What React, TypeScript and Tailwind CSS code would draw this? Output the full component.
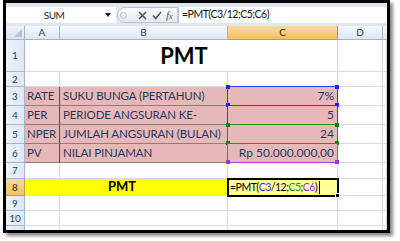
import type { ReactNode } from 'react';

const grid = 'border-r border-b border-[#d4dbe8]';
const font = "font-['Lato','Liberation_Sans',sans-serif]";

function RowHead({ n, h, active }: { n: string; h: string; active?: boolean }) {
  return (
    <div
      className={`w-[19px] ${h} shrink-0 flex items-center justify-center border-r border-b text-[10px] ${
        active
          ? 'bg-gradient-to-b from-[#f9d99f] to-[#f1c15f] border-[#c29b45] text-[#3b2a10]'
          : 'bg-gradient-to-r from-[#eef3fa] to-[#dfe7f2] border-[#9eb6ce] text-[#2c3f5a]'
      }`}
    >
      {n}
    </div>
  );
}

function Row({ n, h, active, children }: { n: string; h: string; active?: boolean; children: ReactNode }) {
  return (
    <div className={`flex ${h} shrink-0`}>
      <RowHead n={n} h={h} active={active} />
      {children}
    </div>
  );
}

function Plain({ w }: { w: string }) {
  return <div className={`${w} shrink-0 h-full ${grid}`} />;
}

function Tail() {
  return (
    <>
      <Plain w="w-[45px]" />
      <div className={`flex-1 h-full ${grid}`} />
    </>
  );
}

function Corner({ c, pos }: { c: string; pos: string }) {
  return <div className={`absolute w-[4px] h-[4px] ${c} ${pos}`} />;
}

function PinkRow({ n, a, b, c, box }: { n: string; a: string; b: string; c: string; box?: ReactNode }) {
  return (
    <Row n={n} h="h-[19px]">
      <div className="w-[35px] shrink-0 h-full bg-[#e6b9b8] border-r border-b border-r-[#5e4848] border-b-[#8f7c7c] flex items-center pl-[2px] text-[11.5px] tracking-[-0.1px] text-[#1f3864] whitespace-nowrap">
        {a}
      </div>
      <div className="w-[168px] shrink-0 h-full bg-[#e6b9b8] border-r border-b border-r-[#5e4848] border-b-[#8f7c7c] flex items-center pl-[3px] text-[11.5px] tracking-[-0.1px] text-[#1f3864] whitespace-nowrap overflow-hidden">
        {b}
      </div>
      <div className="relative w-[110px] shrink-0 h-full bg-[#e6b9b8] border-r border-b border-r-[#5e4848] border-b-[#8f7c7c] flex items-center justify-end pr-[3px] text-[12px] text-[#1f3864] whitespace-nowrap">
        {c}
        {box}
      </div>
      <Tail />
    </Row>
  );
}

function RefBox({ color, bg, top }: { color: string; bg: string; top?: boolean }) {
  return (
    <div className={`absolute -left-[1px] -top-[1px] -right-[1px] -bottom-[1px] border ${color}`}>
      {top !== false && <Corner c={bg} pos="-left-[2px] -top-[2px]" />}
      {top !== false && <Corner c={bg} pos="-right-[2px] -top-[2px]" />}
      <Corner c={bg} pos="-left-[2px] -bottom-[2px]" />
      <Corner c={bg} pos="-right-[2px] -bottom-[2px]" />
    </div>
  );
}

export default function App() {
  return (
    <div className={`w-[400px] h-[241px] bg-white ${font}`}>
      <div className="ml-[3px] w-[387px] h-[233px] border-[3px] border-black shadow-[3px_3px_3px_rgba(0,0,0,0.45)] bg-white overflow-hidden flex flex-col">
        {/* formula bar */}
        <div className="h-[23px] shrink-0 bg-[#dfe6f0] pt-[4px] pb-[3px] flex">
          <div className="w-[110px] h-full bg-white flex items-center">
            <span className="w-[96px] text-center text-[10px] text-[#222] tracking-[-0.5px]">SUM</span>
            <svg width="6" height="4" viewBox="0 0 6 4" className="ml-[3px]">
              <path d="M0 0h6L3 4z" fill="#222" />
            </svg>
          </div>
          <div className="w-[61px] h-full flex items-center rounded-l-full border border-[#b7c3d3] bg-gradient-to-b from-[#fbfcfe] to-[#e4e9f1] ml-[1px]">
            <div className="w-[7px] h-[7px] rounded-full border border-[#b8c0cc] bg-[#eef1f5] ml-[2px]" />
            <svg width="9" height="9" viewBox="0 0 9 9" className="ml-[11px]">
              <path d="M1 1l7 7M8 1L1 8" stroke="#555" strokeWidth="1.6" />
            </svg>
            <svg width="10" height="9" viewBox="0 0 10 9" className="ml-[5px]">
              <path d="M1 4.5l2.8 3L9 1" stroke="#555" strokeWidth="1.6" fill="none" />
            </svg>
            <span className="ml-[4px] font-['Liberation_Serif',serif] italic text-[11px] text-[#555] leading-none">
              f<span className="text-[8px]">x</span>
            </span>
          </div>
          <div className="flex-1 h-full bg-white border-l border-[#b7c3d3] flex items-center pl-[3px] text-[10.5px] tracking-[-0.5px] text-[#111] whitespace-nowrap">
            =PMT(C3/12;C5;C6)
          </div>
        </div>

        {/* column headers */}
        <div className="flex h-[14px] shrink-0 text-[10px] text-[#2c3f5a]">
          <div className="w-[19px] h-full relative bg-gradient-to-b from-[#eef3fa] to-[#dae3ef] border-r border-b border-[#9eb6ce]">
            <svg width="8" height="8" viewBox="0 0 8 8" className="absolute right-[2px] bottom-[2px]">
              <path d="M8 0v8H0z" fill="#b4c2d6" />
            </svg>
          </div>
          <div className="w-[35px] h-full flex items-center justify-center bg-gradient-to-b from-[#f4f7fb] to-[#dde6f1] border-r border-b border-[#9eb6ce]">A</div>
          <div className="w-[168px] h-full flex items-center justify-center bg-gradient-to-b from-[#f4f7fb] to-[#dde6f1] border-r border-b border-[#9eb6ce]">B</div>
          <div className="w-[110px] h-full flex items-center justify-center bg-gradient-to-b from-[#f9d99f] to-[#f1c15f] border-r border-b border-[#c29b45] text-[#3b2a10]">C</div>
          <div className="w-[45px] h-full flex items-center justify-center bg-gradient-to-b from-[#f4f7fb] to-[#dde6f1] border-r border-b border-[#9eb6ce]">D</div>
          <div className="flex-1 h-full bg-gradient-to-b from-[#f4f7fb] to-[#dde6f1] border-b border-[#9eb6ce]" />
        </div>

        {/* rows */}
        <Row n="1" h="h-[32px]">
          <div className={`w-[313px] shrink-0 h-full ${grid} flex items-center justify-center pl-[6px] text-[22px] font-bold text-black`}>
            PMT
          </div>
          <Tail />
        </Row>
        <Row n="2" h="h-[15px]">
          <Plain w="w-[35px]" />
          <Plain w="w-[168px]" />
          <Plain w="w-[110px]" />
          <Tail />
        </Row>
        <PinkRow n="3" a="RATE" b="SUKU BUNGA (PERTAHUN)" c="7%" box={<RefBox color="border-[#3a3aff]" bg="bg-[#2020ff]" />} />
        <PinkRow n="4" a="PER" b="PERIODE ANGSURAN KE-" c="5" />
        <PinkRow n="5" a="NPER" b="JUMLAH ANGSURAN (BULAN)" c="24" box={<RefBox color="border-[#2e8b2e]" bg="bg-[#108010]" />} />
        <PinkRow
          n="6"
          a="PV"
          b="NILAI PINJAMAN"
          c="Rp 50.000.000,00"
          box={<RefBox color="border-[#a040e0] border-t-[#2e8b2e]" bg="bg-[#9a30e0]" top={false} />}
        />
        <Row n="7" h="h-[16px]">
          <Plain w="w-[35px]" />
          <Plain w="w-[168px]" />
          <Plain w="w-[110px]" />
          <Tail />
        </Row>
        <Row n="8" h="h-[17px]" active>
          <div className="w-[203px] shrink-0 h-full bg-[#ffff00] border-r border-b border-[#d4dbe8] flex items-center justify-center pr-[8px] text-[13px] font-bold text-black">
            PMT
          </div>
          <div className="relative w-[110px] shrink-0 h-full">
            <div className="absolute -left-[1px] -top-[1px] w-[112px] h-[19px] border-2 border-black bg-[#ffff9a] flex items-center pl-[1px] text-[10.5px] tracking-[-0.5px] text-black whitespace-nowrap">
              <span>=PMT(</span>
              <span className="text-[#2b2bff]">C3</span>
              <span>/12;</span>
              <span className="text-[#178a17]">C5</span>
              <span>;</span>
              <span className="text-[#9a30e0]">C6</span>
              <span>)</span>
              <span className="ml-[2px] w-[1px] h-[13px] bg-black" />
              <div className="absolute -right-[3px] -bottom-[3px] w-[5px] h-[5px] bg-black border border-white" />
            </div>
          </div>
          <Tail />
        </Row>
        <Row n="9" h="h-[15px]">
          <Plain w="w-[35px]" />
          <Plain w="w-[168px]" />
          <Plain w="w-[110px]" />
          <Tail />
        </Row>
        <Row n="10" h="h-[15px]">
          <Plain w="w-[35px]" />
          <Plain w="w-[168px]" />
          <Plain w="w-[110px]" />
          <Tail />
        </Row>
        <Row n="" h="h-[15px]">
          <Plain w="w-[35px]" />
          <Plain w="w-[168px]" />
          <Plain w="w-[110px]" />
          <Tail />
        </Row>
      </div>
    </div>
  );
}
